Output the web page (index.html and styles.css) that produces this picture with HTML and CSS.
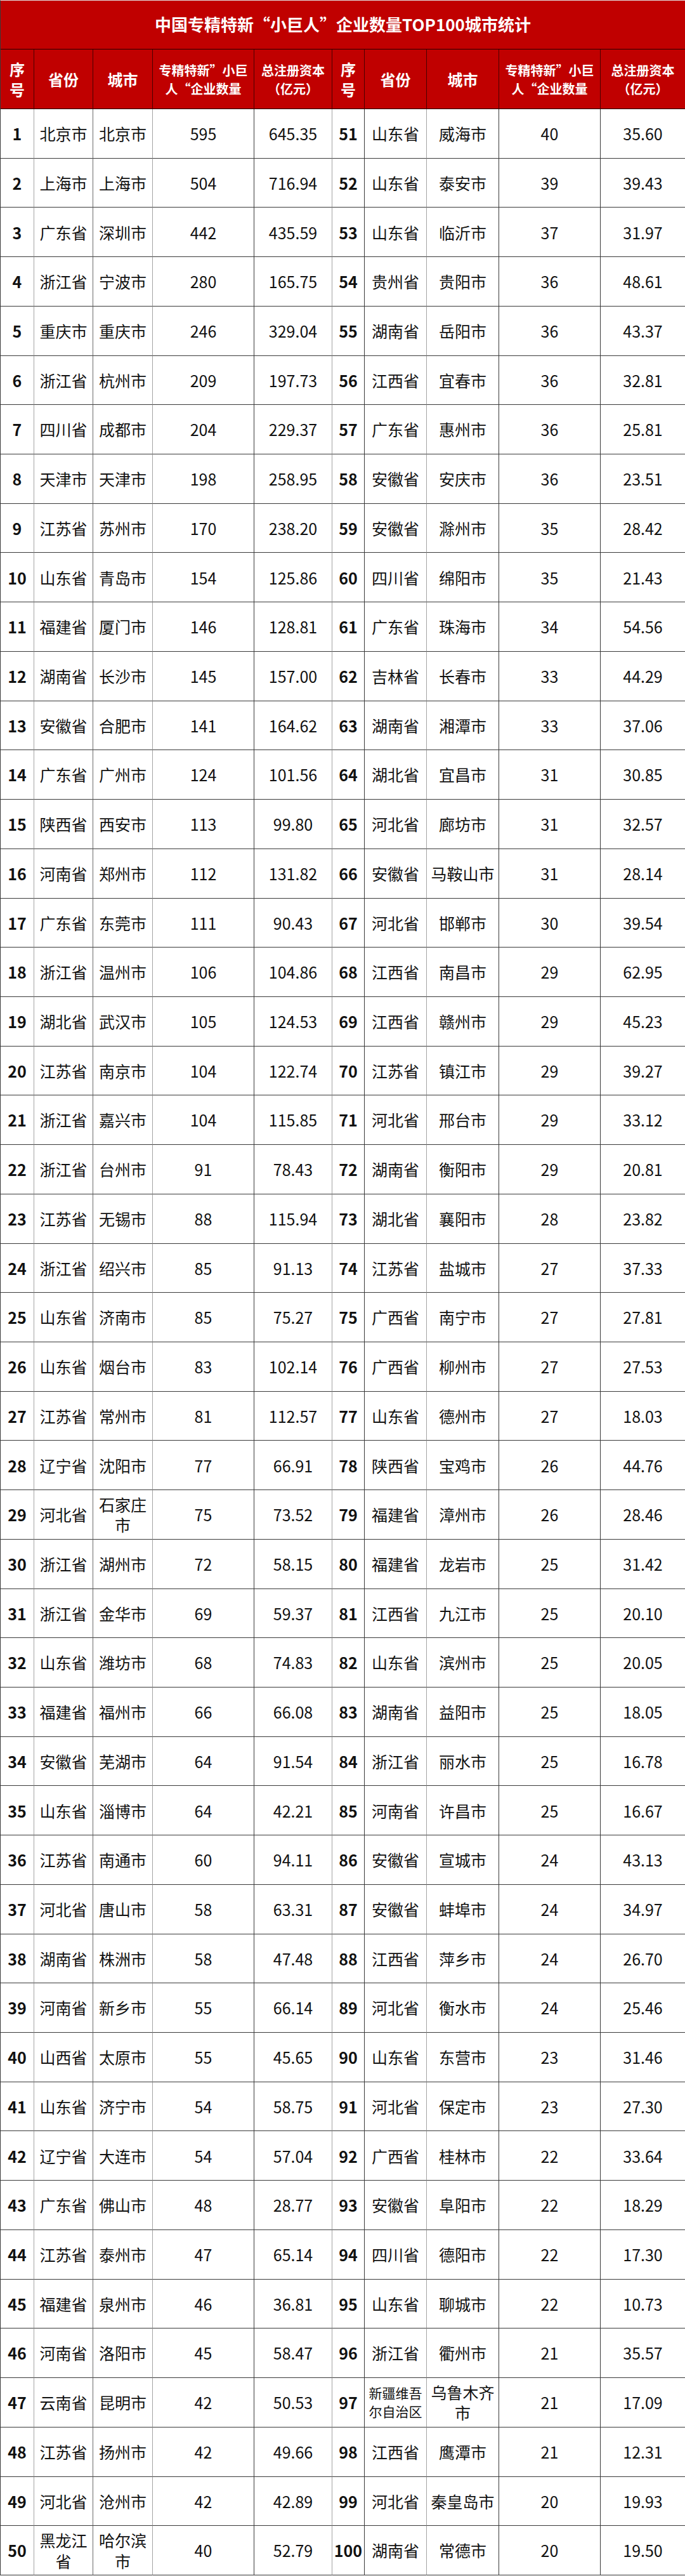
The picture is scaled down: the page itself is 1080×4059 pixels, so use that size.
FILE: index.html
```html
<!DOCTYPE html>
<html lang="zh-CN">
<head>
<meta charset="utf-8">
<title>中国专精特新“小巨人”企业数量TOP100城市统计</title>
<link rel="stylesheet" href="styles.css">
</head>
<body>
<table class="rank-table">
  <colgroup>
    <col class="c-no"><col class="c-prov"><col class="c-city"><col class="c-count"><col class="c-cap">
    <col class="c-no2"><col class="c-prov2"><col class="c-city2"><col class="c-count"><col class="c-cap2">
  </colgroup>
  <thead>
    <tr class="title-row"><th colspan="10" class="title">中国专精特新“小巨人”企业数量TOP100城市统计</th></tr>
    <tr class="head-row">
      <th class="h-big">序<br>号</th><th class="h-big">省份</th><th class="h-big">城市</th>
      <th class="h-small">专精特新”小巨<br>人“企业数量</th><th class="h-small">总注册资本<br>（亿元）</th>
      <th class="h-big">序<br>号</th><th class="h-big">省份</th><th class="h-big">城市</th>
      <th class="h-small">专精特新”小巨<br>人“企业数量</th><th class="h-small">总注册资本<br>（亿元）</th>
    </tr>
  </thead>
  <tbody>
<tr><td>1</td><td>北京市</td><td>北京市</td><td>595</td><td>645.35</td><td>51</td><td>山东省</td><td>威海市</td><td>40</td><td>35.60</td></tr>
<tr><td>2</td><td>上海市</td><td>上海市</td><td>504</td><td>716.94</td><td>52</td><td>山东省</td><td>泰安市</td><td>39</td><td>39.43</td></tr>
<tr><td>3</td><td>广东省</td><td>深圳市</td><td>442</td><td>435.59</td><td>53</td><td>山东省</td><td>临沂市</td><td>37</td><td>31.97</td></tr>
<tr><td>4</td><td>浙江省</td><td>宁波市</td><td>280</td><td>165.75</td><td>54</td><td>贵州省</td><td>贵阳市</td><td>36</td><td>48.61</td></tr>
<tr><td>5</td><td>重庆市</td><td>重庆市</td><td>246</td><td>329.04</td><td>55</td><td>湖南省</td><td>岳阳市</td><td>36</td><td>43.37</td></tr>
<tr><td>6</td><td>浙江省</td><td>杭州市</td><td>209</td><td>197.73</td><td>56</td><td>江西省</td><td>宜春市</td><td>36</td><td>32.81</td></tr>
<tr><td>7</td><td>四川省</td><td>成都市</td><td>204</td><td>229.37</td><td>57</td><td>广东省</td><td>惠州市</td><td>36</td><td>25.81</td></tr>
<tr><td>8</td><td>天津市</td><td>天津市</td><td>198</td><td>258.95</td><td>58</td><td>安徽省</td><td>安庆市</td><td>36</td><td>23.51</td></tr>
<tr><td>9</td><td>江苏省</td><td>苏州市</td><td>170</td><td>238.20</td><td>59</td><td>安徽省</td><td>滁州市</td><td>35</td><td>28.42</td></tr>
<tr><td>10</td><td>山东省</td><td>青岛市</td><td>154</td><td>125.86</td><td>60</td><td>四川省</td><td>绵阳市</td><td>35</td><td>21.43</td></tr>
<tr><td>11</td><td>福建省</td><td>厦门市</td><td>146</td><td>128.81</td><td>61</td><td>广东省</td><td>珠海市</td><td>34</td><td>54.56</td></tr>
<tr><td>12</td><td>湖南省</td><td>长沙市</td><td>145</td><td>157.00</td><td>62</td><td>吉林省</td><td>长春市</td><td>33</td><td>44.29</td></tr>
<tr><td>13</td><td>安徽省</td><td>合肥市</td><td>141</td><td>164.62</td><td>63</td><td>湖南省</td><td>湘潭市</td><td>33</td><td>37.06</td></tr>
<tr><td>14</td><td>广东省</td><td>广州市</td><td>124</td><td>101.56</td><td>64</td><td>湖北省</td><td>宜昌市</td><td>31</td><td>30.85</td></tr>
<tr><td>15</td><td>陕西省</td><td>西安市</td><td>113</td><td>99.80</td><td>65</td><td>河北省</td><td>廊坊市</td><td>31</td><td>32.57</td></tr>
<tr><td>16</td><td>河南省</td><td>郑州市</td><td>112</td><td>131.82</td><td>66</td><td>安徽省</td><td>马鞍山市</td><td>31</td><td>28.14</td></tr>
<tr><td>17</td><td>广东省</td><td>东莞市</td><td>111</td><td>90.43</td><td>67</td><td>河北省</td><td>邯郸市</td><td>30</td><td>39.54</td></tr>
<tr><td>18</td><td>浙江省</td><td>温州市</td><td>106</td><td>104.86</td><td>68</td><td>江西省</td><td>南昌市</td><td>29</td><td>62.95</td></tr>
<tr><td>19</td><td>湖北省</td><td>武汉市</td><td>105</td><td>124.53</td><td>69</td><td>江西省</td><td>赣州市</td><td>29</td><td>45.23</td></tr>
<tr><td>20</td><td>江苏省</td><td>南京市</td><td>104</td><td>122.74</td><td>70</td><td>江苏省</td><td>镇江市</td><td>29</td><td>39.27</td></tr>
<tr><td>21</td><td>浙江省</td><td>嘉兴市</td><td>104</td><td>115.85</td><td>71</td><td>河北省</td><td>邢台市</td><td>29</td><td>33.12</td></tr>
<tr><td>22</td><td>浙江省</td><td>台州市</td><td>91</td><td>78.43</td><td>72</td><td>湖南省</td><td>衡阳市</td><td>29</td><td>20.81</td></tr>
<tr><td>23</td><td>江苏省</td><td>无锡市</td><td>88</td><td>115.94</td><td>73</td><td>湖北省</td><td>襄阳市</td><td>28</td><td>23.82</td></tr>
<tr><td>24</td><td>浙江省</td><td>绍兴市</td><td>85</td><td>91.13</td><td>74</td><td>江苏省</td><td>盐城市</td><td>27</td><td>37.33</td></tr>
<tr><td>25</td><td>山东省</td><td>济南市</td><td>85</td><td>75.27</td><td>75</td><td>广西省</td><td>南宁市</td><td>27</td><td>27.81</td></tr>
<tr><td>26</td><td>山东省</td><td>烟台市</td><td>83</td><td>102.14</td><td>76</td><td>广西省</td><td>柳州市</td><td>27</td><td>27.53</td></tr>
<tr><td>27</td><td>江苏省</td><td>常州市</td><td>81</td><td>112.57</td><td>77</td><td>山东省</td><td>德州市</td><td>27</td><td>18.03</td></tr>
<tr><td>28</td><td>辽宁省</td><td>沈阳市</td><td>77</td><td>66.91</td><td>78</td><td>陕西省</td><td>宝鸡市</td><td>26</td><td>44.76</td></tr>
<tr><td>29</td><td>河北省</td><td>石家庄市</td><td>75</td><td>73.52</td><td>79</td><td>福建省</td><td>漳州市</td><td>26</td><td>28.46</td></tr>
<tr><td>30</td><td>浙江省</td><td>湖州市</td><td>72</td><td>58.15</td><td>80</td><td>福建省</td><td>龙岩市</td><td>25</td><td>31.42</td></tr>
<tr><td>31</td><td>浙江省</td><td>金华市</td><td>69</td><td>59.37</td><td>81</td><td>江西省</td><td>九江市</td><td>25</td><td>20.10</td></tr>
<tr><td>32</td><td>山东省</td><td>潍坊市</td><td>68</td><td>74.83</td><td>82</td><td>山东省</td><td>滨州市</td><td>25</td><td>20.05</td></tr>
<tr><td>33</td><td>福建省</td><td>福州市</td><td>66</td><td>66.08</td><td>83</td><td>湖南省</td><td>益阳市</td><td>25</td><td>18.05</td></tr>
<tr><td>34</td><td>安徽省</td><td>芜湖市</td><td>64</td><td>91.54</td><td>84</td><td>浙江省</td><td>丽水市</td><td>25</td><td>16.78</td></tr>
<tr><td>35</td><td>山东省</td><td>淄博市</td><td>64</td><td>42.21</td><td>85</td><td>河南省</td><td>许昌市</td><td>25</td><td>16.67</td></tr>
<tr><td>36</td><td>江苏省</td><td>南通市</td><td>60</td><td>94.11</td><td>86</td><td>安徽省</td><td>宣城市</td><td>24</td><td>43.13</td></tr>
<tr><td>37</td><td>河北省</td><td>唐山市</td><td>58</td><td>63.31</td><td>87</td><td>安徽省</td><td>蚌埠市</td><td>24</td><td>34.97</td></tr>
<tr><td>38</td><td>湖南省</td><td>株洲市</td><td>58</td><td>47.48</td><td>88</td><td>江西省</td><td>萍乡市</td><td>24</td><td>26.70</td></tr>
<tr><td>39</td><td>河南省</td><td>新乡市</td><td>55</td><td>66.14</td><td>89</td><td>河北省</td><td>衡水市</td><td>24</td><td>25.46</td></tr>
<tr><td>40</td><td>山西省</td><td>太原市</td><td>55</td><td>45.65</td><td>90</td><td>山东省</td><td>东营市</td><td>23</td><td>31.46</td></tr>
<tr><td>41</td><td>山东省</td><td>济宁市</td><td>54</td><td>58.75</td><td>91</td><td>河北省</td><td>保定市</td><td>23</td><td>27.30</td></tr>
<tr><td>42</td><td>辽宁省</td><td>大连市</td><td>54</td><td>57.04</td><td>92</td><td>广西省</td><td>桂林市</td><td>22</td><td>33.64</td></tr>
<tr><td>43</td><td>广东省</td><td>佛山市</td><td>48</td><td>28.77</td><td>93</td><td>安徽省</td><td>阜阳市</td><td>22</td><td>18.29</td></tr>
<tr><td>44</td><td>江苏省</td><td>泰州市</td><td>47</td><td>65.14</td><td>94</td><td>四川省</td><td>德阳市</td><td>22</td><td>17.30</td></tr>
<tr><td>45</td><td>福建省</td><td>泉州市</td><td>46</td><td>36.81</td><td>95</td><td>山东省</td><td>聊城市</td><td>22</td><td>10.73</td></tr>
<tr><td>46</td><td>河南省</td><td>洛阳市</td><td>45</td><td>58.47</td><td>96</td><td>浙江省</td><td>衢州市</td><td>21</td><td>35.57</td></tr>
<tr><td>47</td><td>云南省</td><td>昆明市</td><td>42</td><td>50.53</td><td>97</td><td class="small-text">新疆维吾尔自治区</td><td>乌鲁木齐市</td><td>21</td><td>17.09</td></tr>
<tr><td>48</td><td>江苏省</td><td>扬州市</td><td>42</td><td>49.66</td><td>98</td><td>江西省</td><td>鹰潭市</td><td>21</td><td>12.31</td></tr>
<tr><td>49</td><td>河北省</td><td>沧州市</td><td>42</td><td>42.89</td><td>99</td><td>河北省</td><td>秦皇岛市</td><td>20</td><td>19.93</td></tr>
<tr><td>50</td><td>黑龙江省</td><td>哈尔滨市</td><td>40</td><td>52.79</td><td>100</td><td>湖南省</td><td>常德市</td><td>20</td><td>19.50</td></tr>
  </tbody>
</table>
</body>
</html>
```
FILE: styles.css
```css
html, body {
  margin: 0;
  padding: 0;
  background: #ffffff;
}

.rank-table {
  width: 1080px;
  table-layout: fixed;
  border-collapse: separate;
  border-spacing: 0;
  border-top: 1px solid #e2e2e2;
  border-left: 1px solid #3a3a3a;
  font-family: "Noto Sans CJK SC", "Noto Sans", sans-serif;
  color: #111111;
}

.c-no { width: 53px; }
.c-prov { width: 93px; }
.c-city { width: 94px; }
.c-count { width: 160px; }
.c-cap { width: 123px; }
.c-no2 { width: 51px; }
.c-prov2 { width: 98px; }
.c-city2 { width: 114px; }
.c-cap2 { width: 134px; }

.rank-table th,
.rank-table td {
  padding: 0 2px;
  text-align: center;
  vertical-align: middle;
  border-right: 1px solid #3a3a3a;
  border-bottom: 1px solid #3a3a3a;
}

.title-row { height: 77px; }

.rank-table .title {
  background: #c00000;
  color: #ffffff;
  font-size: 26px;
  font-weight: 700;
  letter-spacing: 0;
  border-right: 1px solid #c00000;
  border-bottom: 1px solid #2a0000;
  padding-bottom: 4px;
}

.head-row { height: 94px; }

.head-row th {
  background: #c00000;
  color: #ffffff;
  font-weight: 700;
  border-right: 1px solid #4a0000;
  border-bottom: 1px solid #1a0000;
}

.head-row .h-big {
  font-size: 24px;
  line-height: 1.3;
}

.head-row .h-small {
  font-size: 20px;
  line-height: 1.45;
}

.rank-table tbody tr { height: 77.72px; }

.rank-table tbody td {
  font-size: 25px;
  line-height: 1.3;
  color: #111111;
}

.rank-table tbody td:nth-child(1),
.rank-table tbody td:nth-child(6) {
  font-weight: 700;
}

.rank-table tbody td:nth-child(1),
.rank-table tbody td:nth-child(3),
.rank-table tbody td:nth-child(5),
.rank-table tbody td:nth-child(7) {
  border-right-color: #a3a3a3;
}

.rank-table tbody td:nth-child(2) {
  border-right-color: #6a6a6a;
}

.rank-table tbody td:nth-child(1),
.rank-table tbody td:nth-child(6) {
  padding: 0;
}

.rank-table tbody td.small-text {
  font-size: 21px;
  line-height: 1.4;
}
```
